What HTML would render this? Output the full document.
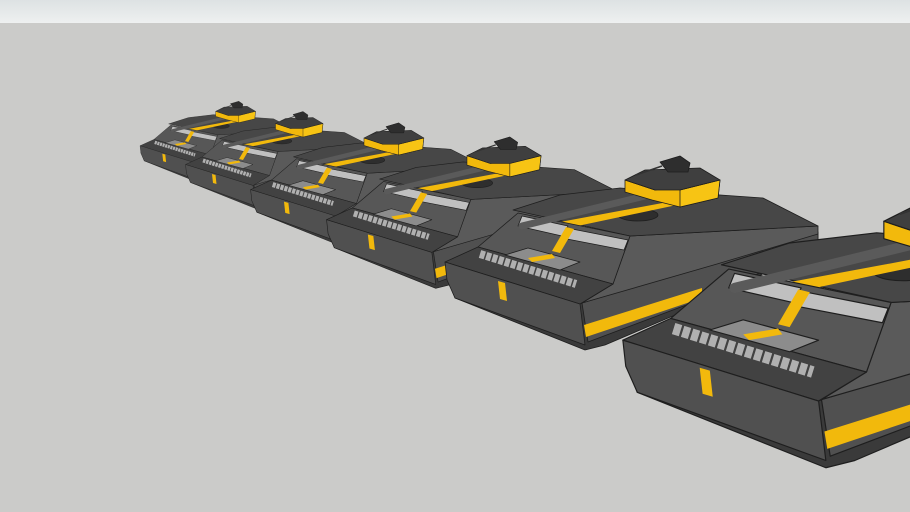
<!DOCTYPE html>
<html><head><meta charset="utf-8"><style>
html,body{margin:0;padding:0;width:910px;height:512px;overflow:hidden;background:#cbcbc9}
</style></head><body>
<svg width="910" height="512" viewBox="0 0 910 512" xmlns="http://www.w3.org/2000/svg">
<defs>
<linearGradient id="sky" x1="0" y1="0" x2="0" y2="1"><stop offset="0" stop-color="#dde2e3"/><stop offset="1" stop-color="#eef0f0"/></linearGradient>
<g id="tank" stroke="#1e1e1e" stroke-width="0.8" stroke-linejoin="round">
  <polygon points="447,278 455,298 585,350 605,345 715,298 818,246 818,232 590,305" fill="#3a3a3a"/>
  <polygon points="582,303 818,232 818,246 710,296 588,342" fill="#505050"/>
  <polygon points="584,325 702,288 702,298 586,337" fill="#f2b90c" stroke="none"/>
  <polygon points="630,236 818,226 818,234 717,264 582,303 613,284" fill="#5a5a5a"/>
  <polygon points="513,210 560,195 620,188 763,198 818,226 630,236" fill="#474747"/>
  <ellipse cx="638" cy="215" rx="20" ry="6" fill="#2e2e2e"/>
  <polygon points="560,222 700,196 705,199 568,228" fill="#f2b90c" stroke="none"/>
  <polygon points="518,213 630,236 613,284 478,247" fill="#575757"/>
  <polygon points="522,216 568,226 562,236 518,226" fill="#c0c0c0"/>
  <polygon points="572,229 628,240 624,250 567,239" fill="#c0c0c0"/>
  <polygon points="566,227 574,229 560,253 552,251" fill="#f2b90c" stroke="none"/>
  <polygon points="478,247 613,284 580,304 445,262" fill="#424242"/>
  <line x1="480" y1="254" x2="576" y2="284" stroke="#b0b0b0" stroke-width="8" stroke-dasharray="5 1.5"/>
  <polygon points="505,255 528,248 580,262 560,270" fill="#8c8c8c"/>
  <polygon points="528,258 552,254 555,258 532,262" fill="#f2b90c" stroke="none"/>
  <polygon points="445,262 580,304 585,345 455,298 447,280" fill="#505050"/>
  <polygon points="498,281 505,283 507,301 500,299" fill="#f2b90c" stroke="none"/>
  <line x1="645" y1="196" x2="522" y2="226" stroke="#5a5a5a" stroke-width="7" stroke-linecap="round"/>
  <polygon points="625,180 655,190 720,180 718,198 680,207 652,200 625,192" fill="#f2b90c"/>
  <polygon points="680,190 720,180 718,198 680,207" fill="#f7c414"/>
  <polygon points="625,180 645,170 700,168 720,180 680,190 655,190" fill="#3f3f3f"/>
  <polygon points="660,162 680,156 690,163 688,172 668,172" fill="#2e2e2e"/>
  <line x1="662" y1="166" x2="636" y2="175" stroke="#333" stroke-width="1.5"/>
</g>
</defs>
<rect x="0" y="0" width="910" height="23" fill="url(#sky)"/>
<use href="#tank" transform="translate(185,126) scale(0.42) translate(-552,-215)"/>
<use href="#tank" transform="translate(239,141) scale(0.5) translate(-552,-215)"/>
<use href="#tank" transform="translate(318,160) scale(0.63) translate(-552,-215)"/>
<use href="#tank" transform="translate(410,183) scale(0.78) translate(-552,-215)"/>
<use href="#tank"/>
<use href="#tank" transform="translate(778,272) scale(1.45) translate(-552,-215)"/>
</svg>
</body></html>
